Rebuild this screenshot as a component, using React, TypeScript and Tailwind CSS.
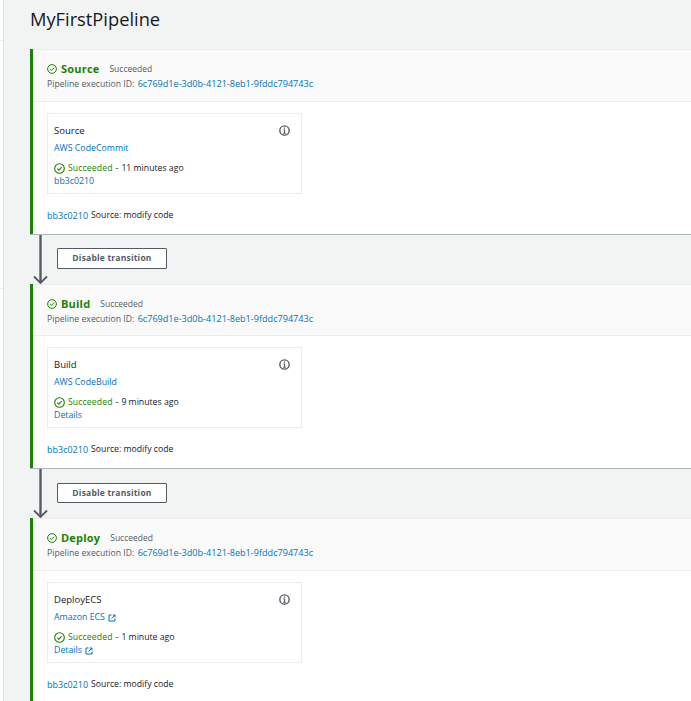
import React from 'react';

type Action = {
  name: string;
  provider: string;
  ago: string;
  link: string;
  external?: boolean;
};

type Stage = {
  title: string;
  headerClass: string;
  action: Action;
};

const stages: Stage[] = [
  { title: 'Source', headerClass: 'h-[53px]', action: { name: 'Source', provider: 'AWS CodeCommit', ago: '11 minutes ago', link: 'bb3c0210' } },
  { title: 'Build', headerClass: 'h-[52px]', action: { name: 'Build', provider: 'AWS CodeBuild', ago: '9 minutes ago', link: 'Details' } },
  { title: 'Deploy', headerClass: 'h-[53px]', action: { name: 'DeployECS', provider: 'Amazon ECS', ago: '1 minute ago', link: 'Details', external: true } },
];

const CheckCircle = ({ size }: { size: number }) => (
  <svg width={size} height={size} viewBox="0 0 16 16" fill="none" stroke="#1d8102" strokeWidth="1.6" className="shrink-0">
    <circle cx="8" cy="8" r="7" />
    <path d="M4.8 8.2l2.2 2.2 4.2-4.4" />
  </svg>
);

const InfoIcon = () => (
  <svg width="11" height="11" viewBox="0 0 16 16" fill="none" stroke="#545b64" strokeWidth="2" className="shrink-0">
    <circle cx="8" cy="8" r="6.8" />
    <path d="M8 7v5M6 12h4M6.5 7H8" strokeWidth="1.7" />
    <path d="M8 3.6v1.8" strokeWidth="2" />
  </svg>
);

const ExternalIcon = () => (
  <svg width="8" height="8" viewBox="0 0 16 16" fill="none" stroke="#0073bb" strokeWidth="2" className="ml-[3px] shrink-0">
    <path d="M7 2H2v12h12V9M9.5 2H14v4.5M14 2L7 9" />
  </svg>
);

const Arrow = () => (
  <svg width="15" height="50" viewBox="0 0 15 50" fill="none" stroke="#545b64" className="shrink-0 -mb-px">
    <path d="M7.5 0v48" strokeWidth="2.4" />
    <path d="M1 41.5l6.5 6.5 6.5-6.5" strokeWidth="1.8" />
  </svg>
);

const StageCard = ({ stage }: { stage: Stage }) => {
  const { action } = stage;
  return (
    <section className="border-l-[3px] border-[#1d8102] bg-white">
      <div className={`${stage.headerClass} border-t border-b border-[#eaeded] bg-[#fafafa] pl-[14px] pt-[12px]`}>
        <div className="flex h-[14px] items-center">
          <CheckCircle size={10} />
          <h2 className="ml-[4px] text-[11px] font-bold tracking-[0.2px] text-[#1d8102]">{stage.title}</h2>
          <span className="ml-[10px] text-[8.5px] text-[#545b64]">Succeeded</span>
        </div>
        <div className="mt-[1px] text-[8.7px] leading-[13px] text-[#545b64]">
          Pipeline execution ID: <a className="ml-[1px] text-[9.1px] text-[#0073bb]">6c769d1e-3d0b-4121-8eb1-9fddc794743c</a>
        </div>
      </div>
      <div className="h-[132px] pl-[14px] pt-[11px]">
        <div className="w-[255px] border border-[#eaeded] bg-white pl-[6px] pr-[7px] pt-[10px]">
          <div className="flex items-center justify-between pr-[4px]">
            <span className="text-[9.5px] leading-[13px] text-[#16191f]">{action.name}</span>
            <InfoIcon />
          </div>
          <div className="mt-[5px] flex items-center text-[8.8px] leading-[13px] text-[#0073bb]">
            {action.provider}
            {action.external && <ExternalIcon />}
          </div>
          <div className="mt-[7px] flex items-center text-[8.7px] leading-[13px] text-[#16191f]">
            <CheckCircle size={11} />
            <span className="ml-[3px] tracking-[0.1px] text-[#1d8102]">Succeeded</span>
            <span className="ml-[3px]">-</span>
            <span className="ml-[3px]">{action.ago}</span>
          </div>
          <div className="mb-[5px] flex items-center text-[8.8px] leading-[13px] text-[#0073bb]">
            {action.link}
            {action.external && <ExternalIcon />}
          </div>
        </div>
        <div className="mt-[15px] flex text-[8.7px] leading-[13px] text-[#16191f]">
          <a className="mr-[3px] text-[9px] text-[#0073bb]">bb3c0210</a>
          <span>Source: modify code</span>
        </div>
      </div>
    </section>
  );
};

const Transition = ({ buttonClass }: { buttonClass: string }) => (
  <div className="flex h-[50px] border-t border-[#aab7b8] pl-[3px]">
    <Arrow />
    <button className={`ml-[9px] ${buttonClass} w-[110px] rounded-[1px] border border-[#545b64] bg-white text-[8.5px] font-bold tracking-[0.2px] text-[#545b64]`}>
      Disable transition
    </button>
  </div>
);

export default function App() {
  return (
    <div className="flex h-[701px] w-[691px] overflow-hidden bg-[#f2f3f3] font-['Open_Sans','Liberation_Sans',sans-serif]">
      <div className="w-[4px] shrink-0 border-r border-[#dfe3e3] bg-white">
        <div className="h-[41px] border-b border-[#eaeded]" />
        <div className="h-[248px] border-b border-[#eaeded]" />
      </div>
      <main className="min-w-0 flex-1 pl-[26px]">
        <h1 className="h-[49px] pt-[6px] text-[18.3px] leading-[26px] text-[#16191f]">MyFirstPipeline</h1>
        <StageCard stage={stages[0]} />
        <Transition buttonClass="mt-[13px] h-[21px]" />
        <StageCard stage={stages[1]} />
        <Transition buttonClass="mt-[14px] h-[20px]" />
        <StageCard stage={stages[2]} />
      </main>
    </div>
  );
}
